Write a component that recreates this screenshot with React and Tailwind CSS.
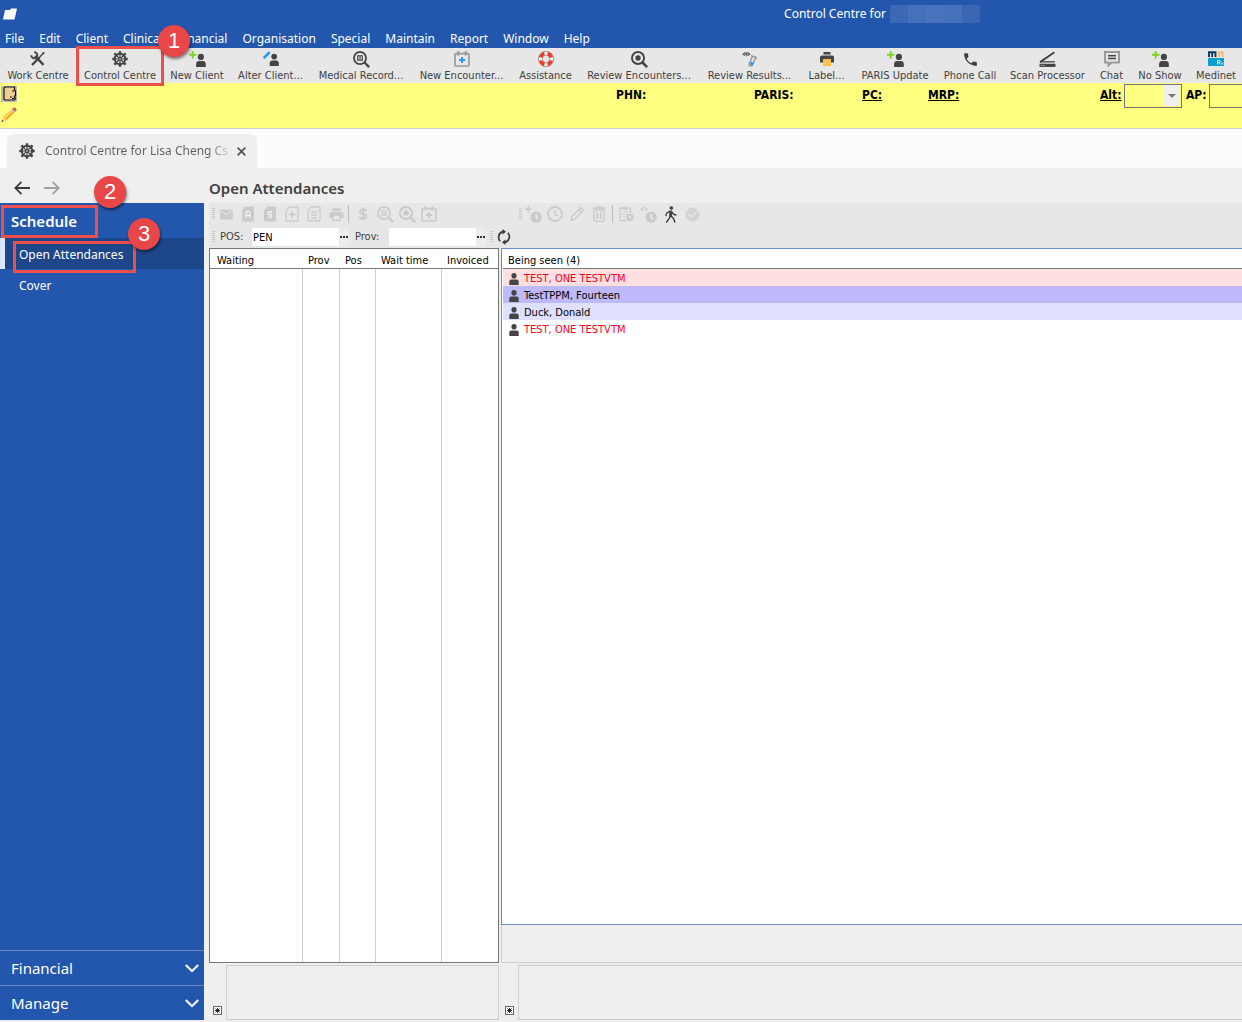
import React from "react";
import { MdPhone, MdPrint, MdEmail, MdCheckCircle } from "react-icons/md";

const TAHOMA = "font-['DejaVu_Sans_Condensed','Noto_Sans',sans-serif]";

function Svg({ size = 16, children, className = "" }) {
  return (
    <svg width={size} height={size} viewBox="0 0 16 16" fill="none" className={`shrink-0 ${className}`} aria-hidden="true">
      {children}
    </svg>
  );
}

/* ---------- main toolbar icons ---------- */
const Tools = () => (
  <Svg>
    <path d="M5 5 13.5 13.8" stroke="#444" strokeWidth="2.4" />
    <path d="M4.2 1.3A3 3 0 1 1 1.3 4.2" stroke="#444" strokeWidth="2" />
    <path d="M2 14 9.5 6.5" stroke="#444" strokeWidth="2.4" />
    <path d="M8.6 7.2 14 1.6" stroke="#444" strokeWidth="1.4" />
    <path d="m12 1.8 2.6-.9-.8 2.7Z" fill="#444" />
  </Svg>
);
const Wheel = () => (
  <Svg>
    <circle cx="8" cy="8" r="5.2" stroke="#444" strokeWidth="2" />
    <path d="M8 2v12M2 8h12M3.8 3.8l8.4 8.4M12.2 3.8l-8.4 8.4" stroke="#444" strokeWidth="1.2" />
    <path d="M8 .3v2.5M8 13.2v2.5M.3 8h2.5M13.2 8h2.5M2.4 2.4l1.8 1.8M11.8 11.8l1.8 1.8M13.6 2.4l-1.8 1.8M4.2 11.8l-1.8 1.8" stroke="#444" strokeWidth="2.5" />
    <circle cx="8" cy="8" r="2.1" fill="#444" />
    <circle cx="8" cy="8" r=".8" fill="#eee" />
  </Svg>
);
const Bust = () => (
  <>
    <circle cx="11.2" cy="5.6" r="2.9" fill="#444" />
    <path d="M6.7 15v-2.6c0-1.8 1-2.9 2.6-2.9h3.9c1.6 0 2.6 1.1 2.6 2.9V15Z" fill="#444" />
  </>
);
const PersonAdd = () => (
  <Svg size={17}>
    <Bust />
    <path d="M3.5 0v7M0 3.5h7" stroke="#7ed321" strokeWidth="1.8" />
  </Svg>
);
const PersonEdit = () => (
  <Svg>
    <Bust />
    <path d="M.8 7 6.6 1.2" stroke="#2196f3" strokeWidth="2.6" />
  </Svg>
);
const LensRecord = ({ color = "#444" }) => (
  <Svg size={17}>
    <circle cx="6.6" cy="6.6" r="5.7" stroke={color} strokeWidth="1.7" />
    <path d="m10.6 10.6 4.6 4.6" stroke={color} strokeWidth="2.2" />
    <path d="M3.8 4.5h5.6M3.8 8.7h5.6M4.4 4.5v4.2M6.6 4.5v4.2M8.8 4.5v4.2" stroke={color} strokeWidth="1.1" />
  </Svg>
);
const LensDot = ({ color = "#444" }) => (
  <Svg size={17}>
    <circle cx="6.6" cy="6.6" r="5.7" stroke={color} strokeWidth="1.8" />
    <path d="m10.6 10.6 4.6 4.6" stroke={color} strokeWidth="2.4" />
    <circle cx="6.6" cy="6.6" r="2.5" fill={color} />
  </Svg>
);
const CalendarPlus = ({ color = "#999", plus = "#2196f3" }) => (
  <Svg>
    <rect x="1" y="2.6" width="14" height="12.4" rx="1" stroke={color} strokeWidth="1.7" />
    <path d="M4.3 0v4.6M11.7 0v4.6" stroke={color} strokeWidth="1.9" />
    <path d="M8 6v6M5 9h6" stroke={plus} strokeWidth="1.9" />
  </Svg>
);
const LifeRing = () => (
  <Svg>
    <circle cx="8" cy="8" r="5.6" stroke="#f4f4f4" strokeWidth="4" />
    <circle cx="8" cy="8" r="7.6" stroke="#777" strokeWidth=".7" />
    <circle cx="8" cy="8" r="3.7" stroke="#777" strokeWidth=".6" />
    <path d="M4.5 3.6A5.600 5.600 0 0 1 6.500 2.600M9.500 2.600a5.600 5.600 0 0 1 3.900 3.900M13.400 9.500a5.600 5.600 0 0 1-3.900 3.900M6.500 13.400a5.600 5.600 0 0 1-3.900-3.900M2.600 6.500a5.600 5.600 0 0 1 2-3" stroke="#e8402f" strokeWidth="3.600" />
  </Svg>
);
const EyeTube = () => (
  <Svg>
    <path d="M.2 3.2Q4.4-1 8.600 3.200 4.400 7.200.2 3.200Z" fill="#555" />
    <circle cx="4.400" cy="3.200" r="1.700" fill="#e7e7e7" />
    <circle cx="4.400" cy="3.200" r="1.100" fill="#444" />
    <path d="m9 4.600 6 2.200M10.400 5.400 7.200 13c-.6 1.700 2.400 2.900 3.200 1.200l3.300-7.600" stroke="#999" strokeWidth="1.500" />
    <path d="m8.600 10.500 3 1.200-1 2.200c-.6 1-2.600.4-2.200-1Z" fill="#2196f3" />
  </Svg>
);
const LabelPrinter = () => (
  <Svg>
    <path d="M4.500 1h7v2.600h-7zM2.800 4.600h10.400c1 0 1.800.8 1.800 1.800v5H1v-5c0-1 .8-1.800 1.800-1.800Z" fill="#444" />
    <path d="M4 8h8v7H4z" fill="#ffb52e" />
    <path d="M4 10.300h8M4 12.700h8M6.600 8v7M9.300 8v7" stroke="#ffd684" strokeWidth=".6" />
  </Svg>
);
const Scanner = () => (
  <Svg size={17}>
    <path d="M1 10.500 14.500 1.200" stroke="#444" strokeWidth="1.800" />
    <path d="M1 10.200h14" stroke="#444" strokeWidth="1.200" />
    <path d="M.5 12h15v3H.5z" fill="#444" />
    <path d="M2 13.500h1M4 13.500h1" stroke="#ddd" strokeWidth=".9" />
  </Svg>
);
const ChatIcon = () => (
  <Svg>
    <path d="M1 1h14v10.500H7.500L4.500 14.500v-3H1Z" stroke="#999" strokeWidth="1.900" />
    <path d="M4 4.800h8M4 7.600h8" stroke="#444" strokeWidth="1.500" />
  </Svg>
);
const Medinet = () => (
  <Svg>
    <path d="M1 6V1.200h6.500V6M4.200 1.200V6" stroke="#0b3a5c" strokeWidth="1.900" />
    <path d="M11 6V1.300h3.500V6" stroke="#f6b26b" strokeWidth="1.800" />
    <path d="M0 7h16v8H0z" fill="#0a9fd0" />
    <path d="M9.500 13.500v-4H11c1.600 0 1.600 2 0 2H9.500m1.500 0 1.200 2m1-2 2 2m0-2-2 2" stroke="#fff" strokeWidth=".8" />
  </Svg>
);

const tools = [
  ["Work Centre", "w-[76px]", <Tools />],
  ["Control Centre", "w-[88px]", <Wheel />],
  ["New Client", "w-[66px]", <PersonAdd />],
  ["Alter Client...", "w-[81px]", <PersonEdit />],
  ["Medical Record...", "w-[100px]", <LensRecord />],
  ["New Encounter...", "w-[101px]", <CalendarPlus />],
  ["Assistance", "w-[67px]", <LifeRing />],
  ["Review Encounters...", "w-[120px]", <LensDot />],
  ["Review Results...", "w-[101px]", <EyeTube />],
  ["Label...", "w-[53px]", <LabelPrinter />],
  ["PARIS Update", "w-[84px]", <PersonAdd />],
  ["Phone Call", "w-[66px]", <MdPhone size={17} />],
  ["Scan Processor", "w-[89px]", <Scanner />],
  ["Chat", "w-[39px]", <ChatIcon />],
  ["No Show", "w-[58px]", <PersonAdd />],
  ["Medinet", "w-[54px]", <Medinet />],
];

/* ---------- secondary toolbar icons ---------- */
const G = "#cbcbcb";
const FileLetter = ({ letter }) => (
  <Svg>
    <path d="M5.500.5H14v15H2V4Z" fill={G} />
    {letter === "A" ? (
      <path d="M6 12V7l1-1.500h2L10 7v5M6 9.500h4" stroke="#f2f2f2" strokeWidth="1.300" />
    ) : (
      <path d="M10 6H6.500v2.700h3V11.400H6" stroke="#f2f2f2" strokeWidth="1.300" />
    )}
  </Svg>
);
const FilePlus = () => (
  <Svg>
    <path d="M5.500 1H14v14H2V4.500Z" stroke={G} strokeWidth="1.300" />
    <path d="M8 5v7M4.500 8.500h7" stroke={G} strokeWidth="1.600" />
  </Svg>
);
const FileLines = () => (
  <Svg>
    <path d="M5.500 1H14v14H2V4.500Z" stroke={G} strokeWidth="1.300" />
    <path d="M5 6h6M5 9h6M5 12h6" stroke={G} strokeWidth="1.300" />
  </Svg>
);
const Dollar = () => (
  <Svg>
    <path d="M11.600 5.400C11 3.900 9.900 3.400 8 3.400c-4.200 0-4.200 4 0 4.600 4.600.6 4.400 4.700 0 4.700-2.100 0-3.400-.7-3.800-2.300M8 1.500v13" stroke={G} strokeWidth="1.900" />
  </Svg>
);
const ClockBadge = ({ children }) => (
  <Svg size={17}>
    {children}
    <circle cx="10.500" cy="10.500" r="5.300" fill={G} />
    <path d="M10.500 7.500v3.300l2 1.500" stroke="#f2f2f2" strokeWidth="1.300" />
  </Svg>
);
const PlusClock = () => (
  <ClockBadge>
    <path d="M3 0v6M0 3h6" stroke={G} strokeWidth="1.500" />
  </ClockBadge>
);
const EyeClock = () => (
  <ClockBadge>
    <path d="M0 3Q3.800-.8 7.600 3 3.800 6.600 0 3Z" fill={G} />
    <circle cx="3.800" cy="3" r="1.200" fill="#eee" />
  </ClockBadge>
);
const ClockIcon = () => (
  <Svg>
    <circle cx="8" cy="8" r="7" stroke={G} strokeWidth="1.900" />
    <path d="M8 4v4.400l2.800 1.700" stroke={G} strokeWidth="1.500" />
  </Svg>
);
const PencilIcon = () => (
  <Svg>
    <path d="m2 14 .8-3.500L11 2.300q1-1 2 0l.8.800q1 1 0 2L5.500 13.300ZM10 3.500l2.700 2.700" stroke={G} strokeWidth="1.400" />
  </Svg>
);
const TrashIcon = () => (
  <Svg>
    <path d="M1.500 2.300h13M5.500 1.200h5" stroke={G} strokeWidth="1.700" />
    <path d="M3 4.300h10V14q0 1.500-1.500 1.500h-7Q3 15.500 3 14Z" stroke={G} strokeWidth="1.500" />
    <path d="M6.300 6.300v7M9.700 6.300v7" stroke={G} strokeWidth="1.600" />
  </Svg>
);
const ClipClock = () => (
  <Svg>
    <path d="M12.500 7V2.200H2v12.300h6" stroke={G} strokeWidth="1.300" />
    <path d="M5 .8h4.500v2.800H5z" fill={G} />
    <path d="M4.200 6h6M4.200 8.500h4M4.200 11h3" stroke={G} />
    <circle cx="11.800" cy="11.600" r="3.800" fill={G} />
    <path d="M11.800 9.500v2.300h1.700" stroke="#f2f2f2" />
  </Svg>
);
const Walker = () => (
  <Svg size={17}>
    <circle cx="8.800" cy="1.900" r="1.700" fill="#3c3c3c" />
    <path d="M7.800 9 7 11.500 4 15.500M8.500 9.500l2.500 2.500 1.200 3.500M7.500 5 4.500 6.500l-1 3M9 5l1.500 2.500 3 1.200" stroke="#3c3c3c" strokeWidth="1.300" />
    <path d="M6.800 4.200h2.400l.3 5.800H6.800Z" fill="#3c3c3c" />
  </Svg>
);
const Refresh = () => (
  <Svg size={16}>
    <path d="M4.200 12.200A5.700 5.700 0 0 1 7 2.700M11.800 3.800A5.700 5.700 0 0 1 9 13.300" stroke="#3c3c3c" strokeWidth="1.700" />
    <path d="M6.500 0v5.600l3.500-2.800ZM9.500 10.400V16L6 13.200Z" fill="#3c3c3c" />
  </Svg>
);
const UserGlyph = () => (
  <svg width="10" height="12" viewBox="0 0 10 12" className="shrink-0" fill="#444" aria-hidden="true">
    <ellipse cx="5" cy="2.800" rx="2.600" ry="2.800" />
    <path d="M.3 12V8.500Q.3 6.600 2.300 6.600h5.400q2 0 2 1.900V12Z" />
  </svg>
);

const Grip = () => (
  <svg width="3" height="12" viewBox="0 0 3 12" className="shrink-0" aria-hidden="true">
    <path d="M0 .5h3M0 2.500h3M0 4.500h3M0 6.500h3M0 8.500h3M0 10.500h3" stroke="#c9c9c9" />
  </svg>
);

const Divider = () => <div className="h-[18px] w-px bg-[#bdbdbd]" />;

function IconButton({ label, children }) {
  return (
    <button aria-label={label} className="flex h-[22px] w-[22px] items-center justify-center">
      {children}
    </button>
  );
}

function Badge({ n, className }) {
  return (
    <span className={`absolute z-20 flex h-8 w-8 items-center justify-center rounded-full bg-[#e94747] font-['Liberation_Sans',Arial,sans-serif] text-[22px] leading-8 font-normal text-white shadow-[1px_2px_3px_rgba(0,0,0,0.5)] ${className}`}>
      {n}
    </span>
  );
}

const Outline = ({ className }) => (
  <span className={`pointer-events-none absolute z-10 border-3 border-[#ee4f4b] ${className}`} />
);

function LookupField({ id, label, value, className }) {
  return (
    <div className="flex items-center">
      <label htmlFor={id} className={className}>{label}</label>
      <input id={id} defaultValue={value} className="h-[18px] w-[87px] bg-white px-px text-black outline-none" />
      <button aria-label={`Browse ${label}`} className="flex h-[18px] w-[10px] items-center justify-center gap-px bg-[#ececec]">
        <i className="h-[2px] w-[2px] bg-[#333]" />
        <i className="h-[2px] w-[2px] bg-[#333]" />
        <i className="h-[2px] w-[2px] bg-[#333]" />
      </button>
    </div>
  );
}

function ExpandButton() {
  return (
    <button aria-label="Expand" className="flex h-[9px] w-[9px] items-center justify-center border border-[#666] bg-white">
      <svg width="5" height="5" viewBox="0 0 5 5" stroke="#000" aria-hidden="true">
        <path d="M2.500 0v5M0 2.500h5M.5.500l4 4M4.500.5l-4 4" strokeWidth=".8" />
      </svg>
    </button>
  );
}

const columns = [
  ["Waiting", "w-[93px] pl-[7px]"],
  ["Prov", "w-[37px] pl-[5px]"],
  ["Pos", "w-[36px] pl-[5px]"],
  ["Wait time", "w-[66px] pl-[5px]"],
  ["Invoiced", "pl-[5px]"],
];

const seen = [
  ["TEST, ONE TESTVTM", "bg-[#ffdfdf] text-[#f80024]"],
  ["TestTPPM, Fourteen", "bg-[#bdb9fb] text-black"],
  ["Duck, Donald", "bg-[#dfdfff] text-black"],
  ["TEST, ONE TESTVTM", "bg-white text-[#f80024]"],
];

function SideSection({ children }) {
  return (
    <button className="flex h-[35px] items-center justify-between border-t border-[#6b86bb] pr-[5px] pl-[11px] text-[15px] text-white">
      {children}
      <svg width="14" height="9" viewBox="0 0 14 9" fill="none" stroke="#fff" strokeWidth="2" aria-hidden="true">
        <path d="m.8 1 6.200 6.200L13.200 1" />
      </svg>
    </button>
  );
}

export default function App() {
  return (
    <div className="flex h-screen flex-col overflow-hidden bg-[#efefef] font-['Noto_Sans',sans-serif] text-[#404040]">
      <header className="bg-[#2357ad] text-[12px] text-white">
        <div className="flex h-7 items-center">
          <svg width="16" height="14" viewBox="0 0 16 14" className="ml-[2px]" fill="#fff" aria-hidden="true">
            <path d="M3 3h5l1-1.500h6L12.500 12.500H1Z" />
          </svg>
          <div className="flex flex-1 items-center justify-center pl-[504px]">
            <span>Control Centre for</span>
            <span className="ml-1 flex h-[18px] w-[90px]">
              <i className="flex-1 bg-[#3d68b5]" />
              <i className="flex-1 bg-[#4570ba]" />
              <i className="flex-1 bg-[#4a74bd]" />
              <i className="flex-1 bg-[#4570ba]" />
              <i className="flex-1 bg-[#3a66b4]" />
            </span>
          </div>
        </div>
        <nav className="relative flex h-5 items-center gap-[15px] pt-px pl-[5px]">
          {["File", "Edit", "Client", "Clinical", "Financial", "Organisation", "Special", "Maintain", "Report", "Window", "Help"].map((m) => (
            <button key={m}>{m}</button>
          ))}
          <Badge n="1" className="top-[-3px] left-[158px]" />
        </nav>
      </header>

      <div className={`flex h-[35px] bg-[#e7e7e7] text-[11px] ${TAHOMA}`}>
        {tools.map(([label, width, icon]) => (
          <button key={label} className={`relative flex shrink-0 flex-col items-center whitespace-nowrap ${width}`}>
            <span className="flex h-[22px] items-center">{icon}</span>
            <span className="leading-[11px]">{label}</span>
            {label === "Control Centre" && <Outline className="-top-[2px] -bottom-[3px] inset-x-0" />}
          </button>
        ))}
      </div>

      <div className={`flex h-[46px] shrink-0 border-b border-[#cfcfcf] bg-[#ffff80] text-[12px] font-bold text-black ${TAHOMA}`}>
        <div className="flex w-[616px] shrink-0 flex-col gap-[5px] pt-[3px] pl-px">
          <svg width="16" height="16" viewBox="0 0 16 16" aria-hidden="true">
            <path d="M0 0h16v16H0z" fill="#bcbcbc" />
            <path d="M4 1h9.500v3l1 1v5h-1v1.500l1 1-1 1.500H4l-1-1V2Z" fill="#f0cf8e" stroke="#111" strokeWidth="1.200" />
            <path d="M11 4.500h2v1h-2zM9 10.500h2v1H9zM11 13h2v-1h-2z" fill="#111" />
          </svg>
          <svg width="16" height="16" viewBox="0 0 16 16" aria-hidden="true">
            <path d="m.5 15 2-5L10 3l3 3-7.500 7.300Z" fill="#fba81c" />
            <path d="m3.500 11 7.500-7" stroke="#ffe08a" strokeWidth="1.500" />
            <path d="m.5 15 2-5 3 3.300Z" fill="#f6d7a7" />
            <path d="m.5 15 .8-2.200 1.400 1.400Z" fill="#333" />
            <path d="m10 3 1.300-1.200 3 3L13 6Z" fill="#b8b8b8" />
            <path d="m11.300 1.800.9-.8q1.500-1 2.700.3t.2 2.600l-.8.900Z" fill="#e0584a" />
          </svg>
        </div>
        <span className="w-[138px] shrink-0 pt-[3px]">PHN:</span>
        <span className="w-[108px] shrink-0 pt-[3px]">PARIS:</span>
        <span className="w-[66px] shrink-0 pt-[3px] underline">PC:</span>
        <span className="w-[172px] shrink-0 pt-[3px] underline">MRP:</span>
        <label htmlFor="alt" className="w-[24px] shrink-0 pt-[3px] underline">Alt:</label>
        <div className="relative mt-px h-6 w-[58px] shrink-0">
          <select id="alt" className="h-6 w-full appearance-none border border-[#777] bg-[#ffff80] outline-none" />
          <span className="pointer-events-none absolute top-px right-[2px] flex h-[21px] w-4 items-center justify-center bg-[#efefef]">
            <svg width="8" height="4" viewBox="0 0 8 4" fill="#777" aria-hidden="true"><path d="M0 0h8L4 4Z" /></svg>
          </span>
        </div>
        <label htmlFor="ap" className="w-[27px] shrink-0 pt-[3px] pl-1">AP:</label>
        <input id="ap" className="mt-px h-6 w-0 min-w-0 flex-1 border border-r-0 border-[#777] bg-[#ffff80] outline-none" />
      </div>

      <div className="flex h-[39px] shrink-0 items-end bg-[#fcfcfc] pl-[7px] text-[12px]">
        <div className="flex h-[34px] w-[250px] items-center rounded-t-md bg-[#efefef] pl-3">
          <Wheel />
          <span className="ml-[10px] w-[192px] bg-linear-to-r from-[#5f5f5f] from-85% to-[#c8c8c8] to-95% bg-clip-text whitespace-nowrap text-transparent">
            Control Centre for Lisa Cheng Cs
          </span>
          <button aria-label="Close tab">
            <svg width="9" height="9" viewBox="0 0 9 9" stroke="#555" strokeWidth="1.700" aria-hidden="true"><path d="m.7.700 7.600 7.600M8.300.7.700 8.300" /></svg>
          </button>
        </div>
      </div>

      <div className="flex min-h-0 flex-1 pb-[2px]">
        <aside className="flex w-[204px] shrink-0 flex-col">
          <div className="flex h-[35px] shrink-0 items-center gap-[14px] pt-[5px] pl-[14px]">
            <button aria-label="Back">
              <svg width="16" height="14" viewBox="0 0 16 14" fill="none" stroke="#3c3c3c" strokeWidth="1.800" aria-hidden="true"><path d="M16 7H1.500M7.500.8 1.300 7l6.200 6.200" /></svg>
            </button>
            <button aria-label="Forward">
              <svg width="16" height="14" viewBox="0 0 16 14" fill="none" stroke="#a0a0a0" strokeWidth="1.800" aria-hidden="true"><path d="M0 7h14.500M8.500.8 14.700 7l-6.200 6.200" /></svg>
            </button>
          </div>
          <nav className="flex flex-1 flex-col bg-[#2357ad] text-white">
            <button className="relative h-[35px] pl-[11px] text-left text-[15px] leading-[37px] font-semibold">
              Schedule
              <Outline className="top-[2px] left-px h-[33px] w-[97px]" />
              <Badge n="2" className="-top-[27px] left-[94px]" />
            </button>
            <button className="relative h-[31px] border-l-5 border-[#dbe6ff] bg-[#1e468b] pl-[14px] text-left text-[12px] leading-[33px]">
              Open Attendances
              <Outline className="top-[3px] left-[8px] h-[32px] w-[123px]" />
              <Badge n="3" className="-top-[20px] left-[123px]" />
            </button>
            <button className="h-[31px] pl-[19px] text-left text-[12px] leading-[33px]">Cover</button>
            <div className="flex-1" />
            <SideSection>Financial</SideSection>
            <SideSection>Manage</SideSection>
          </nav>
        </aside>

        <main className="ml-[5px] flex min-w-0 flex-1 flex-col">
          <h1 className="h-[35px] shrink-0 pt-[5px] text-[15px] leading-[30px] font-semibold">Open Attendances</h1>
          <div className={`h-[45px] shrink-0 bg-[#e7e7e7] text-[11px] ${TAHOMA}`}>
            <div className="flex h-[22px] items-center pl-[3px]">
              <Grip />
              <IconButton label="Email"><MdEmail size={15} color={G} /></IconButton>
              <IconButton label="Form A"><FileLetter letter="A" /></IconButton>
              <IconButton label="Form S"><FileLetter letter="S" /></IconButton>
              <IconButton label="New document"><FilePlus /></IconButton>
              <IconButton label="Document"><FileLines /></IconButton>
              <IconButton label="Print"><MdPrint size={17} color={G} /></IconButton>
              <div className="w-px" />
              <Divider />
              <div className="w-[3px]" />
              <IconButton label="Invoice"><Dollar /></IconButton>
              <IconButton label="Record search"><LensRecord color={G} /></IconButton>
              <IconButton label="Encounter search"><LensDot color={G} /></IconButton>
              <IconButton label="New encounter"><CalendarPlus color={G} plus={G} /></IconButton>
              <div className="w-[79px]" />
              <Grip />
              <IconButton label="Add time"><PlusClock /></IconButton>
              <IconButton label="Time"><ClockIcon /></IconButton>
              <IconButton label="Edit"><PencilIcon /></IconButton>
              <IconButton label="Delete"><TrashIcon /></IconButton>
              <div className="w-[2px]" />
              <Divider />
              <div className="w-[2px]" />
              <IconButton label="Schedule"><ClipClock /></IconButton>
              <IconButton label="View time"><EyeClock /></IconButton>
              <IconButton label="Walk in"><Walker /></IconButton>
              <IconButton label="Complete"><MdCheckCircle size={17} color="#d3d3d3" /></IconButton>
            </div>
            <div className="flex h-[23px] items-center pt-px pl-[3px]">
              <Grip />
              <LookupField id="pos" label="POS:" value="PEN" className="w-[37px] pl-[5px]" />
              <LookupField id="prov" label="Prov:" value="" className="w-[40px] pl-[6px]" />
              <div className="w-1" />
              <Grip />
              <button aria-label="Refresh" className="ml-[3px]"><Refresh /></button>
            </div>
          </div>

          <div className={`flex min-h-0 flex-1 gap-[2px] text-[11px] text-black ${TAHOMA}`}>
            <section className="flex w-[290px] shrink-0 flex-col gap-[2px]">
              <div className="min-h-0 flex-1 border border-[#777] bg-white">
                <table className="h-full w-full table-fixed border-separate border-spacing-0">
                  <thead>
                    <tr className="h-5">
                      {columns.map(([name, cls]) => (
                        <th key={name} className={`border-b border-[#777] pt-1 text-left leading-[15px] font-normal ${cls}`}>{name}</th>
                      ))}
                    </tr>
                  </thead>
                  <tbody>
                    <tr>
                      {columns.map(([name]) => (
                        <td key={name} className="border-r border-[#cfcfcf] last:border-r-0" />
                      ))}
                    </tr>
                  </tbody>
                </table>
              </div>
              <div className="flex h-[55px] items-end gap-1">
                <div className="ml-1 pb-[5px]"><ExpandButton /></div>
                <div className="h-full flex-1 border border-[#cfcfcf]" />
              </div>
            </section>

            <section className="flex min-w-0 flex-1 flex-col">
              <div className="flex min-h-0 flex-1 flex-col border border-r-0 border-[#6a8fc8] bg-white pl-px">
                <table className="w-full border-separate border-spacing-0">
                  <thead>
                    <tr className="h-5">
                      <th className="border-b border-[#777] pt-1 pl-[5px] text-left leading-[15px] font-normal">Being seen (4)</th>
                    </tr>
                  </thead>
                  <tbody>
                    {seen.map(([name, cls], i) => (
                      <tr key={i} className={`h-[17px] ${cls}`}>
                        <td className="p-0">
                          <div className="flex h-[17px] items-center gap-[5px] pt-[2px] pl-[6px]">
                            <span className="pt-px"><UserGlyph /></span>
                            <span className="leading-[15px]">{name}</span>
                          </div>
                        </td>
                      </tr>
                    ))}
                  </tbody>
                </table>
              </div>
              <div className="h-[38px] shrink-0 border-b border-l border-[#cfcfcf]" />
              <div className="mt-[2px] flex h-[55px] shrink-0 items-end gap-1">
                <div className="ml-1 pb-[5px]"><ExpandButton /></div>
                <div className="h-full flex-1 border border-r-0 border-[#cfcfcf]" />
              </div>
            </section>
          </div>
        </main>
      </div>
    </div>
  );
}
